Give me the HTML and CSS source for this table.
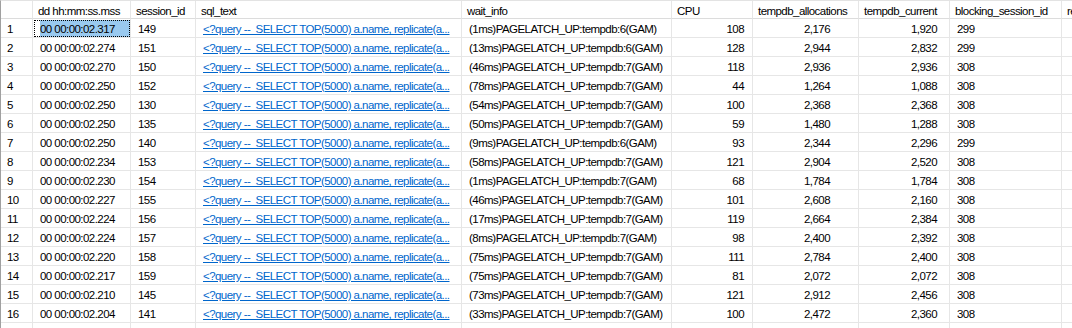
FILE: index.html
```html
<!DOCTYPE html>
<html lang="en">
<head>
    <meta charset="UTF-8">
    <title>Results</title>
    <link rel="stylesheet" href="styles.css">
</head>
<body>
    <div class="results">
        <div class="grid" id="grid">
            <div class="hd num"></div>
            <div class="hd">dd hh:mm:ss.mss</div>
            <div class="hd">session_id</div>
            <div class="hd">sql_text</div>
            <div class="hd">wait_info</div>
            <div class="hd">CPU</div>
            <div class="hd">tempdb_allocations</div>
            <div class="hd">tempdb_current</div>
            <div class="hd">blocking_session_id</div>
            <div class="hd">reads</div>
        </div>
    </div>

    <script>
        // row: duration, session, wait ms, tempdb file, cpu, allocations, current, blocker
        const rows = [
            ['317', 149, 1, 6, 108, '2,176', '1,920', 299],
            ['274', 151, 13, 6, 128, '2,944', '2,832', 299],
            ['270', 150, 46, 7, 118, '2,936', '2,936', 308],
            ['250', 152, 78, 7, 44, '1,264', '1,088', 308],
            ['250', 130, 54, 7, 100, '2,368', '2,368', 308],
            ['250', 135, 50, 7, 59, '1,480', '1,288', 308],
            ['250', 140, 9, 6, 93, '2,344', '2,296', 299],
            ['234', 153, 58, 7, 121, '2,904', '2,520', 308],
            ['230', 154, 1, 7, 68, '1,784', '1,784', 308],
            ['227', 155, 46, 7, 101, '2,608', '2,160', 308],
            ['224', 156, 17, 7, 119, '2,664', '2,384', 308],
            ['224', 157, 8, 7, 98, '2,400', '2,392', 308],
            ['220', 158, 75, 7, 111, '2,784', '2,400', 308],
            ['217', 159, 75, 7, 81, '2,072', '2,072', 308],
            ['210', 145, 73, 7, 121, '2,912', '2,456', 308],
            ['204', 141, 33, 7, 100, '2,472', '2,360', 308],
            ['200', 144, 21, 7, 96, '2,216', '2,104', 308]
        ];

        const grid = document.getElementById('grid');

        function cell(cls, text, isLink) {
            const div = document.createElement('div');
            div.className = 'cell ' + cls;
            if (isLink) {
                const a = document.createElement('a');
                a.href = '#';
                a.textContent = text;
                div.appendChild(a);
            } else {
                div.textContent = text;
            }
            grid.appendChild(div);
            return div;
        }

        rows.forEach(function(r, i) {
            const faded = i === rows.length - 1 ? ' faded' : '';
            cell('num' + faded, i + 1);
            const dur = cell('text' + faded, '00 00:00:02.' + r[0]);
            if (i === 0) dur.classList.add('sel');
            cell('text' + faded, r[1]);
            cell('text' + faded, '<?query --  SELECT TOP(5000) a.name, replicate(a...', true);
            cell('text' + faded, '(' + r[2] + 'ms)PAGELATCH_UP:tempdb:' + r[3] + '(GAM)');
            cell('cpu' + faded, r[4]);
            cell('alloc' + faded, r[5]);
            cell('current' + faded, r[6]);
            cell('text' + faded, r[7]);
            cell('text' + faded, '');
        });
    </script>
</body>
</html>
```

FILE: styles.css
```css
body {
    margin: 0;
    background-color: #fff;
    font-family: "Liberation Sans", Arial, sans-serif;
    font-size: 11.5px;
    letter-spacing: -0.55px;
    color: #000;
}
.results {
    width: 1072px;
    height: 328px;
    overflow: hidden;
    box-sizing: border-box;
    border-left: 1px solid #a0a0a0;
    border-top: 1px solid #e3e3e3;
}
.grid {
    display: grid;
    grid-template-columns: 32px 98px 65px 266px 210px 81px 106px 91px 112px 120px;
    grid-auto-rows: 19px;
    grid-template-rows: 18px;
    width: max-content;
}
.hd,
.cell {
    box-sizing: border-box;
    border-right: 1px solid #e6e6e6;
    border-bottom: 1px solid #e6e6e6;
    white-space: pre;
    overflow: hidden;
    line-height: 18px;
    padding-top: 1px;
}
.hd {
    padding-left: 5px;
    border-bottom-color: #dcdcdc;
}
.cell {
    padding-left: 7px;
}
.cell.num {
    padding-left: 6px;
}
.cpu,
.alloc,
.current {
    text-align: right;
}
.cpu {
    padding-right: 8px;
}
.alloc {
    padding-right: 28px;
}
.current {
    padding-right: 12px;
}
.sel {
    background-color: #99c9ef;
    background-clip: content-box;
    padding: 1px 0 0 7px;
    box-shadow: inset 1px 0 0 #fff;
    outline: 1px dotted #000;
    outline-offset: -2px;
}
.cell a {
    color: #0066cc;
    text-decoration: underline;
}
.faded,
.faded a {
    color: #c8c8c8;
}
```
